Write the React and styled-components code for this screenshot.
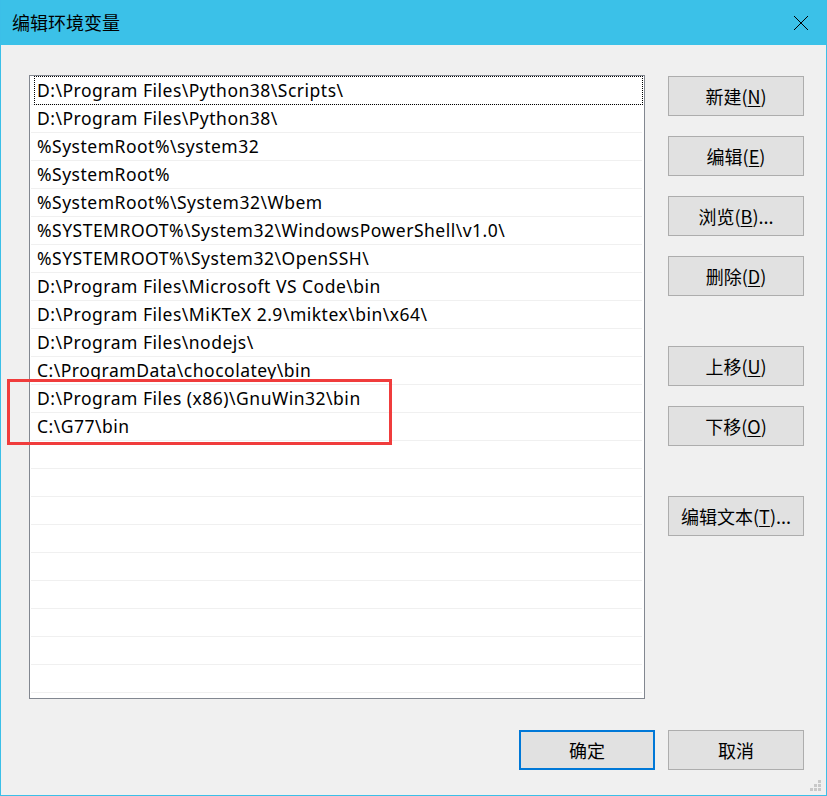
import React from "react";
import styled, { createGlobalStyle } from "styled-components";

const Global = createGlobalStyle`
  html, body { margin: 0; padding: 0; background: #f0f0f0; }
  body { font-family: "Noto Sans", "Noto Sans CJK SC", sans-serif; }
  * { box-sizing: border-box; }
`;

const Window = styled.div`
  width: 827px;
  height: 796px;
  background: #f0f0f0;
  border: 1px solid #3bbfe8;
  border-top: none;
  display: flex;
  flex-direction: column;
  position: relative;
  overflow: hidden;
`;

const TitleBar = styled.div`
  height: 45px;
  background: #3bc1e8;
  margin: 0 -1px;
  display: flex;
  align-items: center;
  justify-content: space-between;
  padding: 0 18px 0 12px;
  flex-shrink: 0;
`;

const Title = styled.div`
  font-family: "Noto Sans CJK SC", sans-serif;
  font-size: 18px;
  color: #000;
  padding-bottom: 1px;
`;

const Body = styled.div`
  display: flex;
  padding: 30px 22px 0 28px;
  gap: 23px;
`;

const List = styled.div`
  width: 616px;
  height: 624px;
  flex-shrink: 0;
  background: #fff;
  border: 1px solid #828790;
  padding: 1px 1px 0 1px;
  overflow: hidden;
`;

const Row = styled.div`
  height: 28px;
  border-bottom: 1px solid #f0f0f0;
  margin-right: 1px;
  padding-left: 6px;
  font-family: "Noto Sans", "Noto Sans CJK SC", sans-serif;
  font-size: 17.5px;
  letter-spacing: 0.5px;
  line-height: 27px;
  color: #000;
  white-space: nowrap;
  position: relative;
  ${(p) =>
    p.$focused &&
    `
    &::before {
      content: "";
      position: absolute;
      left: 3px;
      right: -1px;
      top: -1px;
      bottom: -1px;
      border: 1px dotted #000;
    }
  `}
`;

const Side = styled.div`
  display: flex;
  flex-direction: column;
  padding-top: 1px;
  flex-shrink: 0;
`;

const Button = styled.button`
  width: 136px;
  height: 40px;
  flex-shrink: 0;
  margin-top: ${(p) => p.$gap || 0}px;
  background: #e1e1e1;
  border: ${(p) => (p.$primary ? "2px solid #0078d7" : "1px solid #adadad")};
  font-family: "Noto Sans CJK SC", sans-serif;
  font-size: 18px;
  color: #000;
  padding: 0;
  display: flex;
  align-items: center;
  justify-content: center;
  cursor: default;
`;

const Key = styled.span`
  text-decoration: underline;
  text-underline-offset: 2px;
  text-decoration-thickness: 1px;
`;

const Footer = styled.div`
  display: flex;
  justify-content: flex-end;
  gap: 13px;
  padding: 31px 22px 0 0;
`;

const Highlight = styled.div`
  position: absolute;
  left: 6px;
  top: 379px;
  width: 385px;
  height: 66px;
  border: 3px solid #f03c3c;
  pointer-events: none;
`;

const Grip = styled.svg`
  position: absolute;
  right: 4px;
  bottom: 3px;
`;

const items = [
  "D:\\Program Files\\Python38\\Scripts\\",
  "D:\\Program Files\\Python38\\",
  "%SystemRoot%\\system32",
  "%SystemRoot%",
  "%SystemRoot%\\System32\\Wbem",
  "%SYSTEMROOT%\\System32\\WindowsPowerShell\\v1.0\\",
  "%SYSTEMROOT%\\System32\\OpenSSH\\",
  "D:\\Program Files\\Microsoft VS Code\\bin",
  "D:\\Program Files\\MiKTeX 2.9\\miktex\\bin\\x64\\",
  "D:\\Program Files\\nodejs\\",
  "C:\\ProgramData\\chocolatey\\bin",
  "D:\\Program Files (x86)\\GnuWin32\\bin",
  "C:\\G77\\bin",
];

const rows = Array.from({ length: 22 }, (_, i) => items[i] || "");

const sideButtons = [
  { label: "新建", key: "N", gap: 0 },
  { label: "编辑", key: "E", gap: 20 },
  { label: "浏览", key: "B", gap: 20, tail: "..." },
  { label: "删除", key: "D", gap: 20 },
  { label: "上移", key: "U", gap: 50 },
  { label: "下移", key: "O", gap: 20 },
  { label: "编辑文本", key: "T", gap: 50, tail: "..." },
];

export default function App() {
  return (
    <>
      <Global />
      <Window>
        <TitleBar>
          <Title>编辑环境变量</Title>
          <svg width="16" height="16" viewBox="0 0 16 16">
            <path d="M1 1 L15 15 M15 1 L1 15" stroke="#000" strokeWidth="1" fill="none" />
          </svg>
        </TitleBar>
        <Body>
          <List>
            {rows.map((t, i) => (
              <Row key={i} $focused={i === 0}>
                {t}
              </Row>
            ))}
          </List>
          <Side>
            {sideButtons.map((b) => (
              <Button key={b.key} $gap={b.gap}>
                {b.label}(<Key>{b.key}</Key>){b.tail || ""}
              </Button>
            ))}
          </Side>
        </Body>
        <Footer>
          <Button $primary>确定</Button>
          <Button>取消</Button>
        </Footer>
        <Highlight />
        <Grip width="12" height="12" viewBox="0 0 12 12">
          {[
            [8, 0],
            [8, 4],
            [4, 4],
            [8, 8],
            [4, 8],
            [0, 8],
          ].map(([x, y], i) => (
            <rect key={i} x={x} y={y} width="3" height="3" fill="#c8c8c8" />
          ))}
        </Grip>
      </Window>
    </>
  );
}
